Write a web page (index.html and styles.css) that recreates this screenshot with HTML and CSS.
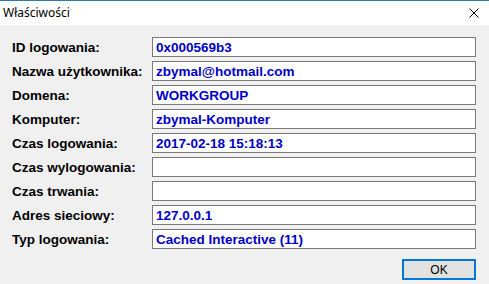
FILE: index.html
```html
<!DOCTYPE html>
<html lang="pl">
<head>
  <meta charset="UTF-8">
  <title>Właściwości</title>
  <link rel="stylesheet" href="styles.css">
</head>
<body>
  <div class="window">
    <div class="titlebar">
      <span class="title">Właściwości</span>
      <svg class="close" width="10" height="10" viewBox="0 0 10 10">
        <path d="M0.5 0.5 L9.5 9.5 M9.5 0.5 L0.5 9.5" stroke="#000" stroke-width="1"/>
      </svg>
    </div>
    <div class="content">
      <div class="form">
        <label>ID logowania:</label><div class="field">0x000569b3</div>
        <label>Nazwa użytkownika:</label><div class="field">zbymal@hotmail.com</div>
        <label>Domena:</label><div class="field">WORKGROUP</div>
        <label>Komputer:</label><div class="field">zbymal-Komputer</div>
        <label>Czas logowania:</label><div class="field">2017-02-18 15:18:13</div>
        <label>Czas wylogowania:</label><div class="field"></div>
        <label>Czas trwania:</label><div class="field"></div>
        <label>Adres sieciowy:</label><div class="field">127.0.0.1</div>
        <label>Typ logowania:</label><div class="field">Cached Interactive (11)</div>
      </div>
      <div class="buttons">
        <button>OK</button>
      </div>
    </div>
  </div>
</body>
</html>
```

FILE: styles.css
```css
html, body {
  margin: 0;
  padding: 0;
  background: #f0f0f0;
}
.window {
  width: 489px;
  height: 284px;
  border-top: 1px solid #2f7ba6;
  box-sizing: border-box;
  background: #f0f0f0;
}
.titlebar {
  height: 24px;
  background: #fff;
  display: flex;
  align-items: center;
  justify-content: space-between;
  padding: 0 10px 0 3px;
}
.title {
  font-family: "Noto Sans", sans-serif;
  font-size: 12px;
  color: #000;
  margin-top: -1px;
}
.close {
  display: block;
  margin-top: -1px;
}
.content {
  padding: 12px 13px 0 12px;
}
.form {
  display: grid;
  grid-template-columns: 140px 324px;
  grid-auto-rows: 20px;
  row-gap: 4px;
  font-family: "Liberation Sans", Arial, sans-serif;
  font-size: 13.5px;
  font-weight: bold;
}
.form label {
  display: flex;
  align-items: center;
  color: #000;
}
.field {
  background: #fff;
  border: 1px solid #7a7a7a;
  color: #0000c8;
  display: flex;
  align-items: center;
  padding-left: 3px;
  white-space: nowrap;
}
.buttons {
  display: flex;
  justify-content: flex-end;
  margin-top: 10px;
}
button {
  width: 74px;
  height: 21px;
  background: #e1e1e1;
  border: 2px solid #0078d7;
  font-family: "Liberation Sans", Arial, sans-serif;
  font-size: 12px;
  color: #000;
  padding: 0;
}
```
